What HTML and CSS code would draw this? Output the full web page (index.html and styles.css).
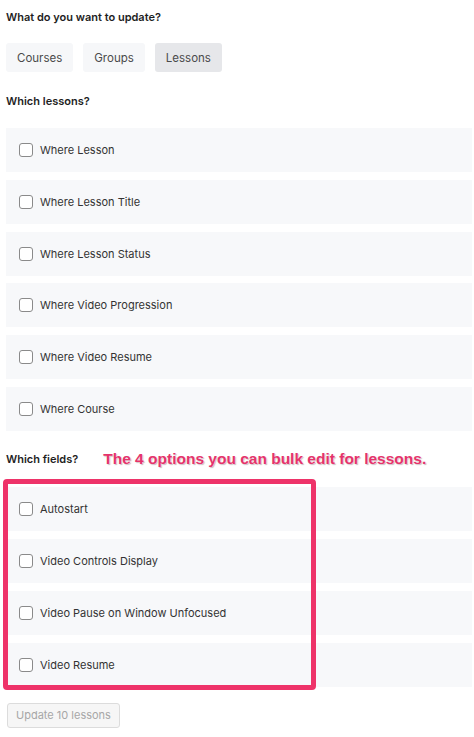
FILE: index.html
```html
<!DOCTYPE html>
<html>
<head>
<meta charset="utf-8">
<link rel="stylesheet" href="styles.css">
</head>
<body>
<div class="page">
  <div class="label label-top">What do you want to update?</div>
  <div class="tabs">
    <button class="tab">Courses</button>
    <button class="tab">Groups</button>
    <button class="tab tab-active">Lessons</button>
  </div>
  <div class="label label-lessons">Which lessons?</div>
  <div class="list">
    <label class="row"><span class="box"></span>Where Lesson</label>
    <label class="row"><span class="box"></span>Where Lesson Title</label>
    <label class="row"><span class="box"></span>Where Lesson Status</label>
    <label class="row"><span class="box"></span>Where Video Progression</label>
    <label class="row"><span class="box"></span>Where Video Resume</label>
    <label class="row"><span class="box"></span>Where Course</label>
  </div>
  <div class="fields-head">
    <span class="label">Which fields?</span>
    <span class="note">The 4 options you can bulk edit for lessons.</span>
  </div>
  <div class="list fields">
    <label class="row"><span class="box"></span>Autostart</label>
    <label class="row"><span class="box"></span>Video Controls Display</label>
    <label class="row"><span class="box"></span>Video Pause on Window Unfocused</label>
    <label class="row"><span class="box"></span>Video Resume</label>
    <div class="highlight"></div>
  </div>
  <button class="submit">Update 10 lessons</button>
</div>
</body>
</html>
```
FILE: styles.css
```css
* { box-sizing: border-box; }
html, body { margin: 0; padding: 0; background: #fff; }
body {
  font-family: Inter, "Noto Sans", sans-serif;
  color: #3a3a3a;
}
.page {
  padding: 0 2px 0 6px;
  display: flex;
  flex-direction: column;
  align-items: flex-start;
}
.label {
  font-size: 11px;
  font-weight: 600;
  color: #1e1e1e;
  line-height: 14px;
}
.label-top { margin-top: 10px; }
.tabs {
  display: flex;
  gap: 10px;
  margin-top: 19px;
}
.tab {
  font-family: inherit;
  font-size: 11.5px;
  color: #4a4a4a;
  background: #f6f7f9;
  border: 0;
  border-radius: 3px;
  height: 29px;
  padding: 0 11px;
  cursor: pointer;
}
.tab-active { background: #e6e7ea; }
.label-lessons { margin-top: 22px; }
.list {
  align-self: stretch;
  display: flex;
  flex-direction: column;
  gap: 7.8px;
  margin-top: 20px;
  position: relative;
}
.row {
  height: 44px;
  background: #f7f8fa;
  display: flex;
  align-items: center;
  padding-left: 13px;
  font-size: 11px;
  color: #333;
}
.box {
  width: 14px;
  height: 14px;
  border: 1px solid #8a8a8a;
  border-radius: 3px;
  background: #fff;
  margin-right: 7px;
  flex: none;
}
.fields-head {
  display: flex;
  align-items: center;
  margin-top: 19.5px;
}
.note {
  margin-left: 25px;
  font-family: "Liberation Sans", Arial, sans-serif;
  font-weight: bold;
  font-size: 15.5px;
  color: #e5336b;
  text-shadow: 0 0 2px #fff, 1px 1px 1px rgba(120, 80, 90, 0.45);
}
.fields { margin-top: 19px; }
.highlight {
  position: absolute;
  left: -3px;
  top: -8px;
  width: 313px;
  height: 211px;
  border: 5px solid #ee3369;
  border-radius: 4px;
  pointer-events: none;
}
.submit {
  margin-top: 16px;
  margin-left: 1px;
  font-family: inherit;
  font-size: 11px;
  color: #a7a7a7;
  background: #f6f6f6;
  border: 1px solid #dcdcdc;
  border-radius: 3px;
  height: 25px;
  padding: 0 8px;
}
```
